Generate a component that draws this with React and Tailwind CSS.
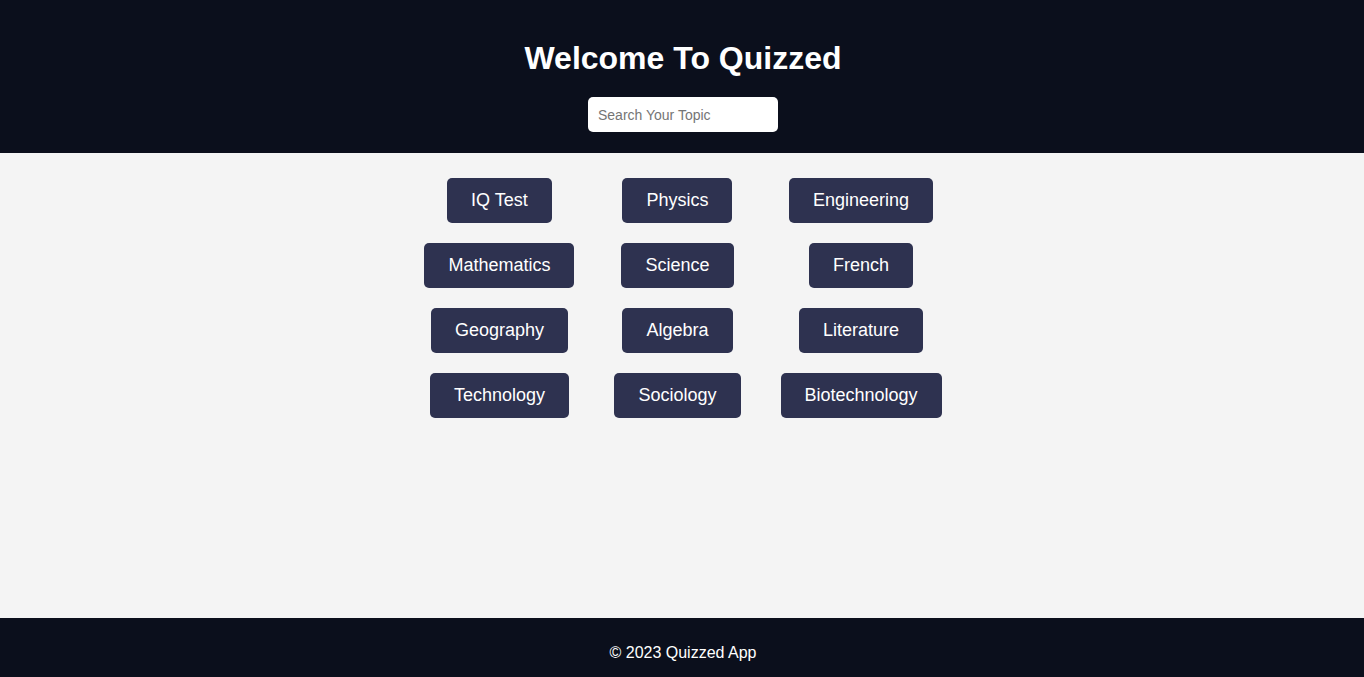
export default function App() {
  const topics = [
    'IQ Test', 'Physics', 'Engineering',
    'Mathematics', 'Science', 'French',
    'Geography', 'Algebra', 'Literature',
    'Technology', 'Sociology', 'Biotechnology',
  ];

  return (
    <div className="flex min-h-screen flex-col bg-[#f4f4f4] font-['Liberation_Sans',Arial,sans-serif]">
      <header className="flex flex-col items-center bg-[#0b0f1c] pt-[40px] pb-[21px] pl-[2px]">
        <h1 className="text-[32px] leading-[37px] font-bold text-white">Welcome To Quizzed</h1>
        <input
          type="text"
          placeholder="Search Your Topic"
          className="mt-[20px] h-[35px] w-[190px] rounded-[5px] bg-white px-[10px] text-[14px] text-black outline-none placeholder:text-[#757575]"
        />
      </header>

      <main className="flex-1 pt-[25px] pl-[2px]">
        <div className="grid grid-cols-[repeat(3,auto)] justify-center justify-items-center gap-x-[40px] gap-y-[20px]">
          {topics.map(t => (
            <button
              key={t}
              className="h-[45px] rounded-[5px] bg-[#2e3250] px-[24px] text-[18px] text-white"
            >
              {t}
            </button>
          ))}
        </div>
      </main>

      <footer className="h-[59px] bg-[#0b0f1c] pt-[26px] pl-[2px] text-center text-[16px] leading-[18px] text-white">
        © 2023 Quizzed App
      </footer>
    </div>
  );
}
